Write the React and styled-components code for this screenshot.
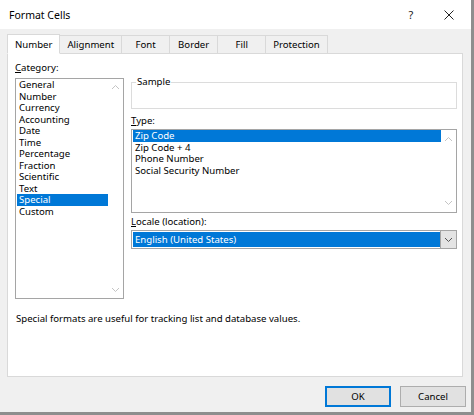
import React from 'react';
import styled, { createGlobalStyle } from 'styled-components';

const GlobalStyle = createGlobalStyle`
  html, body {
    margin: 0;
    padding: 0;
    background: #8e8e8e;
  }
  body {
    font-family: "Noto Sans", "Liberation Sans", sans-serif;
    font-size: 9.6px;
    color: #000;
  }
`;

const Window = styled.div`
  width: 471px;
  height: 412px;
  background: #f0f0f0;
  display: flex;
  flex-direction: column;
`;

const TitleBar = styled.div`
  height: 29px;
  background: #fff;
  display: flex;
  align-items: center;
  padding: 0 3px 0 9px;
`;

const Title = styled.div`
  flex: 1;
  font-size: 10.5px;
`;

const TitleButton = styled.div`
  width: 38px;
  height: 29px;
  display: flex;
  align-items: center;
  justify-content: center;
  font-size: 11px;
  color: #222;
`;

const Body = styled.div`
  padding: 5px 8px 0 7px;
`;

const Tabs = styled.div`
  display: flex;
  height: 20px;
  margin-bottom: -1px;
  position: relative;
  z-index: 1;
`;

const Tab = styled.div`
  min-width: 48px;
  box-sizing: border-box;
  padding: 0 7px;
  display: flex;
  align-items: center;
  justify-content: center;
  border: 1px solid #d9d9d9;
  border-left: ${(p) => (p.$first ? '1px solid #d9d9d9' : 'none')};
  border-bottom-color: ${(p) => (p.$active ? '#fff' : '#d9d9d9')};
  background: ${(p) => (p.$active ? '#fff' : '#f0f0f0')};
  margin-top: ${(p) => (p.$active ? '0' : '1px')};
`;

const Panel = styled.div`
  height: 324px;
  box-sizing: border-box;
  background: #fff;
  border: 1px solid #d9d9d9;
  padding: 7px 5px 0 7px;
`;

const Columns = styled.div`
  display: grid;
  grid-template-columns: 109px 1fr;
  column-gap: 7px;
  align-items: start;
`;

const Column = styled.div`
  display: flex;
  flex-direction: column;
  padding-top: ${(p) => p.$top || 0}px;
`;

const Label = styled.div`
  line-height: 14px;
  height: 14px;
  margin-bottom: ${(p) => p.$gap || 3}px;
  margin-top: ${(p) => p.$mt || 0}px;
`;

const ListBox = styled.div`
  height: ${(p) => p.$height}px;
  box-sizing: border-box;
  border: 1px solid #a5a5a5;
  background: #fff;
  display: flex;
`;

const Items = styled.div`
  flex: 1;
  padding: 0 0 0 1px;
`;

const Item = styled.div`
  height: ${(p) => p.$h}px;
  line-height: ${(p) => p.$h}px;
  padding-left: 2px;
  white-space: nowrap;
  background: ${(p) => (p.$selected ? '#0078d7' : 'transparent')};
  color: ${(p) => (p.$selected ? '#fff' : '#000')};
`;

const ScrollTrack = styled.div`
  width: 15px;
  display: flex;
  flex-direction: column;
  justify-content: space-between;
  align-items: center;
  padding: ${(p) => p.$pad || '4px 0'};
`;

const Group = styled.fieldset`
  margin: 0;
  padding: 0;
  height: 33px;
  box-sizing: border-box;
  border: 1px solid #dcdcdc;
  border-radius: 0;
`;

const Legend = styled.legend`
  padding: 0 1px;
  margin-left: 4px;
  line-height: 12px;
`;

const Select = styled.div`
  height: 19px;
  box-sizing: border-box;
  border: 1px solid #a5a5a5;
  display: flex;
  padding: 1px 0 1px 1px;
`;

const SelectValue = styled.div`
  flex: 1;
  background: #0078d7;
  color: #fff;
  line-height: 15px;
  padding-left: 2px;
`;

const SelectButton = styled.div`
  width: 15px;
  margin-top: -1px;
  margin-bottom: -1px;
  border-left: 1px solid #a5a5a5;
  background: #e4e4e4;
  display: flex;
  align-items: center;
  justify-content: center;
`;

const Description = styled.div`
  margin-top: 13px;
  padding-left: 1px;
  line-height: 14px;
`;

const Footer = styled.div`
  display: flex;
  justify-content: flex-end;
  gap: 9px;
  padding: 9px 5px 0 0;
`;

const Button = styled.div`
  width: 66px;
  height: 21px;
  box-sizing: border-box;
  display: flex;
  align-items: center;
  justify-content: center;
  background: #e1e1e1;
  border: 1px solid ${(p) => (p.$default ? '#0078d7' : '#adadad')};
  box-shadow: ${(p) => (p.$default ? 'inset 0 0 0 1px #0078d7' : 'none')};
`;

const Chevron = ({ up, color = '#c4c4c4' }) => (
  <svg width="9" height="6" viewBox="0 0 9 6">
    <path
      d={up ? 'M1 5 L4.5 1.5 L8 5' : 'M1 1 L4.5 4.5 L8 1'}
      fill="none"
      stroke={color}
      strokeWidth="1"
    />
  </svg>
);

const CloseIcon = () => (
  <svg width="10" height="10" viewBox="0 0 10 10">
    <path d="M0.5 0.5 L9.5 9.5 M9.5 0.5 L0.5 9.5" stroke="#222" strokeWidth="1" />
  </svg>
);

const tabs = ['Number', 'Alignment', 'Font', 'Border', 'Fill', 'Protection'];
const categories = [
  'General', 'Number', 'Currency', 'Accounting', 'Date', 'Time',
  'Percentage', 'Fraction', 'Scientific', 'Text', 'Special', 'Custom',
];
const types = ['Zip Code', 'Zip Code + 4', 'Phone Number', 'Social Security Number'];

const App = () => (
  <Window>
    <GlobalStyle />
    <TitleBar>
      <Title>Format Cells</Title>
      <TitleButton>?</TitleButton>
      <TitleButton><CloseIcon /></TitleButton>
    </TitleBar>
    <Body>
      <Tabs>
        {tabs.map((t, i) => (
          <Tab key={t} $first={i === 0} $active={i === 0}>{t}</Tab>
        ))}
      </Tabs>
      <Panel>
        <Columns>
          <Column>
            <Label><u>C</u>ategory:</Label>
            <ListBox $height={221}>
              <Items>
                {categories.map((c) => (
                  <Item key={c} $h={11.5} $selected={c === 'Special'}>{c}</Item>
                ))}
              </Items>
              <ScrollTrack $pad="5px 0 5px">
                <Chevron up />
                <Chevron />
              </ScrollTrack>
            </ListBox>
          </Column>
          <Column $top={15}>
            <Group>
              <Legend>Sample</Legend>
            </Group>
            <Label $mt={5} $gap={1}><u>T</u>ype:</Label>
            <ListBox $height={84}>
              <Items>
                {types.map((t) => (
                  <Item key={t} $h={11.7} $selected={t === 'Zip Code'}>{t}</Item>
                ))}
              </Items>
              <ScrollTrack $pad="6px 0 6px">
                <Chevron up />
                <Chevron />
              </ScrollTrack>
            </ListBox>
            <Label $mt={2} $gap={1}><u>L</u>ocale (location):</Label>
            <Select>
              <SelectValue>English (United States)</SelectValue>
              <SelectButton>
                <Chevron color="#555" />
              </SelectButton>
            </Select>
          </Column>
        </Columns>
        <Description>Special formats are useful for tracking list and database values.</Description>
      </Panel>
    </Body>
    <Footer>
      <Button $default>OK</Button>
      <Button>Cancel</Button>
    </Footer>
  </Window>
);

export default App;
